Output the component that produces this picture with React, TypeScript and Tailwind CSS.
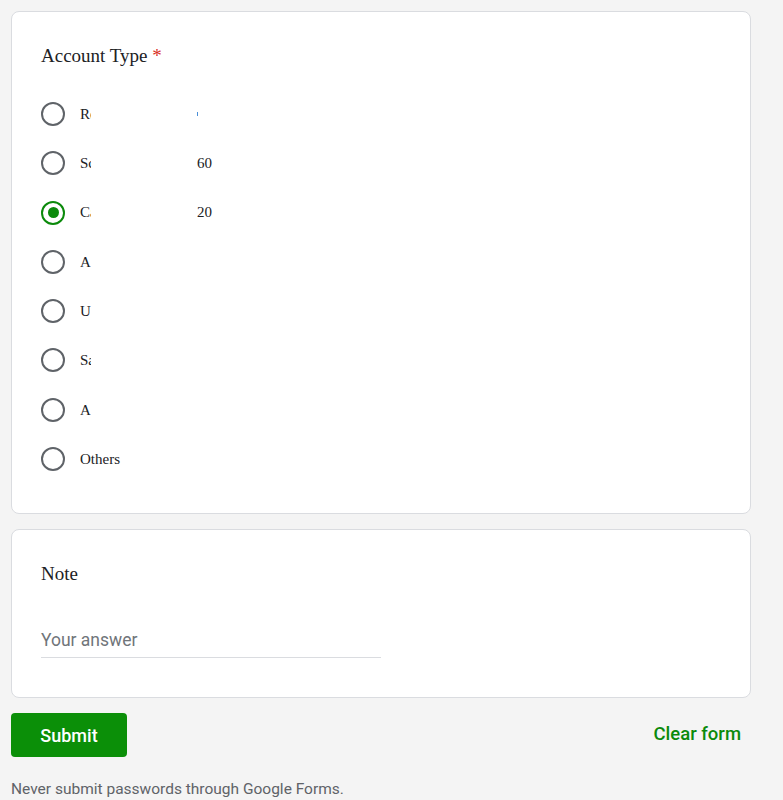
import React from 'react';

type Option = { head: string; tail?: string; checked?: boolean; mark?: boolean };

const options: Option[] = [
  { head: 'Re', mark: true },
  { head: 'Sc', tail: '60' },
  { head: 'Ca', tail: '20', checked: true },
  { head: 'A' },
  { head: 'U' },
  { head: 'Sa' },
  { head: 'A' },
  { head: 'Others' },
];

function Radio({ checked }: { checked?: boolean }) {
  return (
    <span
      className={
        'flex h-6 w-6 shrink-0 items-center justify-center rounded-full border-2 ' +
        (checked ? 'border-[#0b8a0b]' : 'border-[#5f6368]')
      }
    >
      {checked && <span className="h-[11px] w-[11px] rounded-full bg-[#0b8a0b]" />}
    </span>
  );
}

export default function App() {
  return (
    <div className="min-h-[800px] bg-[#f4f4f4] px-[11px] pt-[11px] font-['Liberation_Serif',serif]">
      <div className="w-[740px]">
        {/* question card */}
        <div className="rounded-lg border border-[#dadce0] bg-white px-[29px] pb-[42px] pt-[32px]">
          <h2 className="text-[19px] leading-6 text-[#202124]">
            Account Type <span className="text-[#d93025]">*</span>
          </h2>
          <div className="mt-[34px] flex flex-col gap-[25.3px]">
            {options.map((o, i) => (
              <label key={i} className="flex h-6 items-center">
                <Radio checked={o.checked} />
                <span className="ml-[15px] text-[15px] text-[#202124]">
                  {o.head === 'Others' ? (
                    'Others'
                  ) : (
                    <span className="inline-block w-[11px] overflow-hidden whitespace-nowrap align-bottom">
                      {o.head}
                    </span>
                  )}
                </span>
                {o.tail && (
                  <span className="ml-[106px] text-[15px] text-[#202124]">{o.tail}</span>
                )}
                {o.mark && <span className="ml-[106px] h-[4px] w-px bg-[#4a8fd8]" />}
              </label>
            ))}
          </div>
        </div>

        {/* note card */}
        <div className="mt-[15px] rounded-lg border border-[#dadce0] bg-white px-[29px] pb-[39px] pt-[32px]">
          <h2 className="text-[19px] leading-6 text-[#202124]">Note</h2>
          <div className="mt-[41px] w-[340px] border-b border-[#dadce0] pb-[4px] font-['Roboto',sans-serif] text-[17.5px] text-[#70757a]">
            Your answer
          </div>
        </div>

        {/* actions */}
        <div className="mt-[15px] flex items-center justify-between">
          <button className="h-[44px] w-[116px] rounded bg-[#0b8f08] font-['Roboto',sans-serif] text-[18px] font-medium text-white">
            Submit
          </button>
          <button className="mr-[10px] font-['Roboto',sans-serif] text-[18.5px] font-medium text-[#0b8a0b]">
            Clear form
          </button>
        </div>
        <p className="mt-[21px] font-['Roboto',sans-serif] text-[15.5px] text-[#5f6368]">
          Never submit passwords through Google Forms.
        </p>
      </div>
    </div>
  );
}
